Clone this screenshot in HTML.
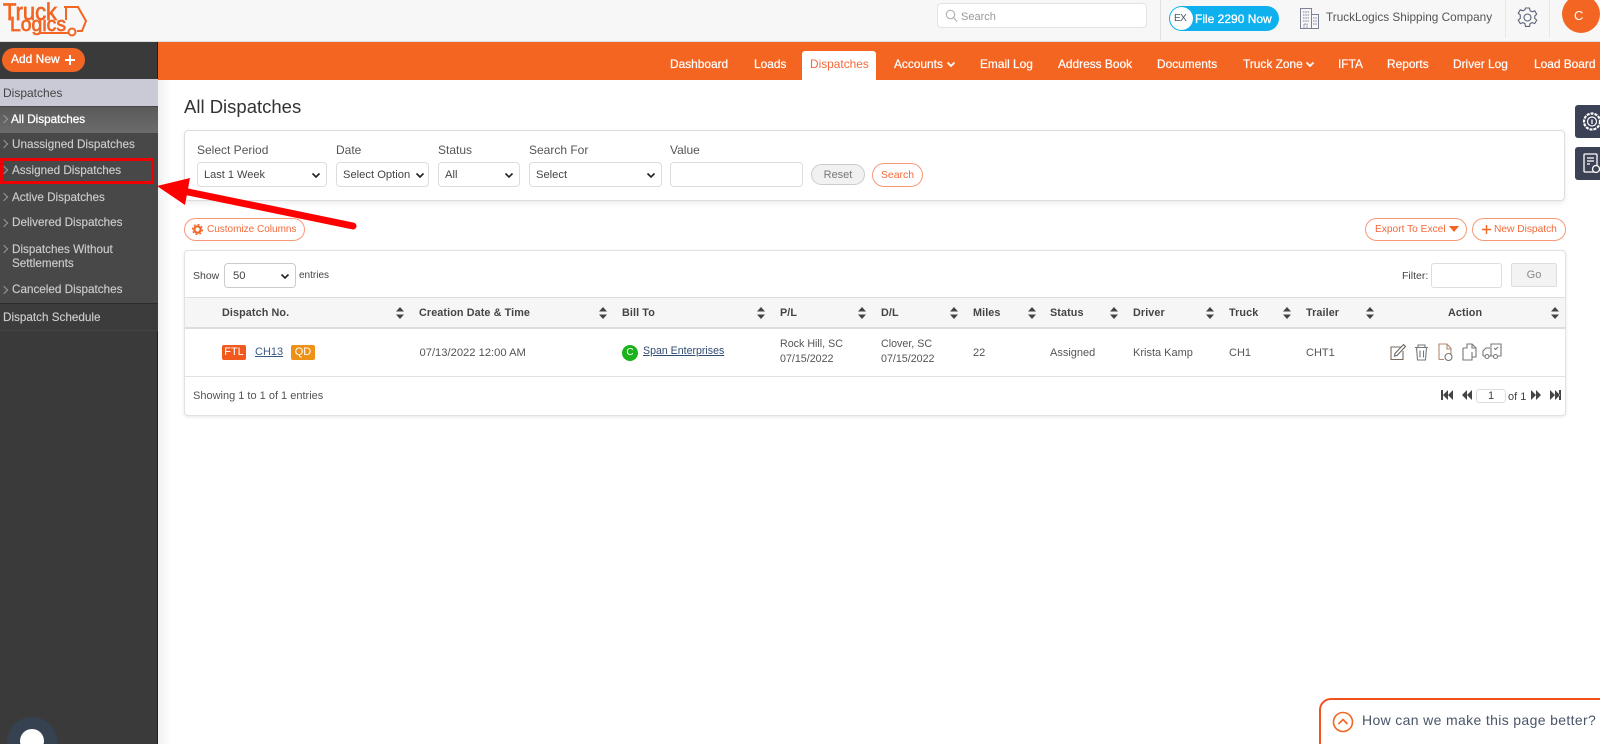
<!DOCTYPE html>
<html><head><meta charset="utf-8"><title>All Dispatches</title>
<style>
*{box-sizing:border-box}
html,body{margin:0;padding:0;width:1600px;height:744px;overflow:hidden;background:#fff;font-family:"Liberation Sans",sans-serif;color:#3f4450}
#p{position:relative;width:1600px;height:744px;overflow:hidden;contain:paint}
.a{position:absolute}
.t{position:absolute;white-space:nowrap;line-height:16px;font-size:12px}
.nav{position:absolute;top:56px;color:#fff;font-size:11.9px;line-height:16px;white-space:nowrap;font-weight:400;-webkit-text-stroke:.2px #fff}
.side{position:absolute;left:12px;color:#ccc;font-size:11.7px;line-height:16px;white-space:nowrap;-webkit-text-stroke:.15px #ccc}
.chev{position:absolute;left:1px;width:6px;height:6px;border-top:1px solid #999;border-right:1px solid #999;transform:rotate(45deg)}
.box{position:absolute;background:#fff;border:1px solid #ddd;border-radius:4px;font-size:11.2px;line-height:24px;padding-left:7px;color:#444}
.box svg{position:absolute;right:5px;top:9px}
.btn{position:absolute;border:1px solid #f8997a;border-radius:13px;color:#f6693a;font-size:10.2px;line-height:22px;white-space:nowrap;background:#fff}
.th{position:absolute;top:305px;font-size:10.8px;line-height:16px;font-weight:700;color:#444;white-space:nowrap;letter-spacing:.1px}
.td{position:absolute;font-size:11px;line-height:14px;color:#555;white-space:nowrap}
.s{position:absolute;top:307px}
</style></head><body><div id="p">

<!-- header -->
<div class="a" style="left:0;top:0;width:1600px;height:42px;background:#f7f7f7;border-bottom:1px solid #ddd"></div>
<svg class="a" style="left:0;top:0" width="92" height="40" viewBox="0 0 92 40">
<text x="3" y="20" font-family="Liberation Sans" font-size="24" fill="#f26522" stroke="#f26522" stroke-width=".7" textLength="54" lengthAdjust="spacingAndGlyphs">Truck</text>
<text x="10" y="31" font-family="Liberation Sans" font-size="20" fill="#f26522" stroke="#f26522" stroke-width=".7" textLength="56" lengthAdjust="spacingAndGlyphs">Logics</text>
<path d="M64 7H78L86 21 82 31H77M68 33H40M66 7V20" fill="none" stroke="#f26522" stroke-width="2"/>
<circle cx="72" cy="32" r="3.500" fill="none" stroke="#f26522" stroke-width="2"/>
</svg>

<div class="a" style="left:937px;top:3px;width:210px;height:25px;background:#fff;border:1px solid #e3e3e3;border-radius:4px"></div>
<svg class="a" style="left:945px;top:9px" width="13" height="14"><circle cx="5.500" cy="5.500" r="4.200" fill="none" stroke="#aaa"/><path d="M8.500 8.500L12 12.500" stroke="#aaa"/></svg>
<div class="t" style="left:961px;top:9px;color:#999;font-size:11px">Search</div>
<div class="a" style="left:1160px;top:0;width:1px;height:40px;background:#e2e2e2"></div>
<div class="a" style="left:1169px;top:6px;width:110px;height:25px;background:#0fb0ee;border-radius:13px"></div>
<div class="a" style="left:1170px;top:7px;width:23px;height:23px;background:#fff;border-radius:50%"></div>
<div class="t" style="left:1174px;top:11px;font-size:10px;color:#456;letter-spacing:-.5px">EX</div>
<div class="t" style="left:1195px;top:11px;color:#fff;font-size:12px;font-weight:400;-webkit-text-stroke:.3px #fff">File 2290 Now</div>
<svg class="a" style="left:1300px;top:8px" width="19" height="21" fill="none" stroke="#7a8296"><rect x=".5" y=".5" width="11" height="20"/><rect x="11.500" y="6.500" width="7" height="14"/><path d="M3 4h6M3 7h6M3 10h6M3 13h6M13 10h4M13 13h4M13 16h4M4 20v-4h3v4" stroke-dasharray="1.500 .8"/></svg>
<div class="t" style="left:1326px;top:9px;font-size:11.800px;color:#555">TruckLogics Shipping Company</div>
<div class="a" style="left:1505px;top:0;width:1px;height:38px;background:#e8e8e8"></div>
<svg class="a" style="left:1517px;top:7px" width="21" height="21" viewBox="0 0 21 21" fill="none" stroke="#5a6478" stroke-width="1.100"><path d="M8.500 1h4l.6 2.800 2 1 2.600-1 2 3.400-2 1.900v2.200l2 1.900-2 3.400-2.600-1-2 1-.6 2.800h-4l-.6-2.800-2-1-2.600 1-2-3.400 2-1.900V8.100l-2-1.900 2-3.400 2.600 1 2-1z"/><circle cx="10.500" cy="10.500" r="3.500"/></svg>
<div class="a" style="left:1549px;top:0;width:1px;height:38px;background:#e8e8e8"></div>
<div class="a" style="left:1562px;top:-5px;width:38px;height:38px;background:#f26522;border-radius:50%"></div>
<div class="t" style="left:1574px;top:8px;color:#fff;font-size:13px">C</div>

<!-- orange bar -->
<div class="a" style="left:158px;top:42px;width:1442px;height:38px;background:#f56522"></div>
<div class="a" style="left:802px;top:51px;width:74px;height:29px;background:#fff;border-radius:3px 3px 0 0"></div>
<div class="nav" style="left:670px">Dashboard</div>
<div class="nav" style="left:754px">Loads</div>
<div class="nav" style="left:810px;color:#f6693a;-webkit-text-stroke:0">Dispatches</div>
<div class="nav" style="left:894px">Accounts</div>
<svg class="a" style="left:946px;top:61px" width="10" height="7"><path d="M1.500 1.500L5 5 8.500 1.500" fill="none" stroke="#fff" stroke-width="1.800"/></svg>
<div class="nav" style="left:980px">Email Log</div>
<div class="nav" style="left:1058px">Address Book</div>
<div class="nav" style="left:1157px">Documents</div>
<div class="nav" style="left:1243px">Truck Zone</div>
<svg class="a" style="left:1305px;top:61px" width="10" height="7"><path d="M1.500 1.500L5 5 8.500 1.500" fill="none" stroke="#fff" stroke-width="1.800"/></svg>
<div class="nav" style="left:1338px">IFTA</div>
<div class="nav" style="left:1387px">Reports</div>
<div class="nav" style="left:1453px">Driver Log</div>
<div class="nav" style="left:1534px">Load Board</div>

<!-- sidebar -->
<div class="a" style="left:0;top:42px;width:158px;height:702px;background:#3a3a3a;border-right:1px solid #222"></div>
<div class="a" style="left:158px;top:80px;width:14px;height:664px;background:linear-gradient(90deg,#f1f1f1,#fff)"></div>
<div class="a" style="left:2px;top:48px;width:83px;height:24px;background:#f26522;border-radius:12px"></div>
<div class="t" style="left:11px;top:51px;color:#fff;font-size:12px;-webkit-text-stroke:.3px #fff">Add New</div>
<svg class="a" style="left:64px;top:54px" width="12" height="12"><path d="M6 1v10M1 6h10" stroke="#fff" stroke-width="2"/></svg>
<div class="a" style="left:0;top:79px;width:158px;height:27px;background:#c9cad6"></div>
<div class="t" style="left:3px;top:85px;font-size:12px;color:#444">Dispatches</div>
<div class="a" style="left:0;top:106px;width:158px;height:197px;background:#484848"></div>
<div class="a" style="left:0;top:107px;width:158px;height:26px;background:linear-gradient(180deg,#5a5a5a,#6b6b6b)"></div>
<div class="chev" style="top:116px"></div><div class="side" style="top:112px;color:#fff;-webkit-text-stroke:.3px #fff;left:11px">All Dispatches</div>
<div class="chev" style="top:141px"></div><div class="side" style="top:137px">Unassigned Dispatches</div>
<div class="chev" style="top:167px"></div><div class="side" style="top:163px">Assigned Dispatches</div>
<div class="chev" style="top:194px"></div><div class="side" style="top:190px">Active Dispatches</div>
<div class="chev" style="top:220px"></div><div class="side" style="top:215px">Delivered Dispatches</div>
<div class="chev" style="top:246px"></div><div class="side" style="top:243px;line-height:14px">Dispatches Without<br>Settlements</div>
<div class="chev" style="top:287px"></div><div class="side" style="top:282px">Canceled Dispatches</div>
<div class="a" style="left:0;top:303px;width:158px;height:28px;background:#3c3c3c;border-top:1px solid #2c2c2c;border-bottom:1px solid #444"></div>
<div class="side" style="left:3px;top:310px">Dispatch Schedule</div>
<div class="a" style="left:7px;top:717px;width:50px;height:50px;border-radius:50%;background:#36424f"></div>
<div class="a" style="left:20px;top:729px;width:24px;height:24px;border-radius:50%;background:#fff"></div>

<!-- title -->
<div class="t" style="left:184px;top:96px;font-size:18.500px;line-height:22px;color:#333">All Dispatches</div>

<!-- filter card -->
<div class="a" style="left:184px;top:130px;width:1381px;height:71px;background:#fff;border:1px solid #ddd;border-radius:4px;box-shadow:0 2px 6px rgba(0,0,0,.08)"></div>
<div class="t" style="left:197px;top:142px;color:#555">Select Period</div>
<div class="t" style="left:336px;top:142px;color:#555">Date</div>
<div class="t" style="left:438px;top:142px;color:#555">Status</div>
<div class="t" style="left:529px;top:142px;color:#555">Search For</div>
<div class="t" style="left:670px;top:142px;color:#555">Value</div>
<div class="box" style="left:197px;top:162px;width:130px;height:25px;font-size:11px;padding-left:6px">Last 1 Week<svg width="10" height="7"><path d="M1.500 1.500L5 5 8.500 1.500" fill="none" stroke="#222" stroke-width="1.600"/></svg></div>
<div class="box" style="left:336px;top:162px;width:93px;height:25px;padding-left:6px">Select Option<svg width="10" height="7" style="right:3px"><path d="M1.500 1.500L5 5 8.500 1.500" fill="none" stroke="#222" stroke-width="1.600"/></svg></div>
<div class="box" style="left:438px;top:162px;width:82px;height:25px;padding-left:6px">All<svg width="10" height="7"><path d="M1.500 1.500L5 5 8.500 1.500" fill="none" stroke="#222" stroke-width="1.600"/></svg></div>
<div class="box" style="left:529px;top:162px;width:133px;height:25px;padding-left:6px">Select<svg width="10" height="7"><path d="M1.500 1.500L5 5 8.500 1.500" fill="none" stroke="#222" stroke-width="1.600"/></svg></div>
<div class="box" style="left:670px;top:162px;width:133px;height:25px"></div>
<div class="a" style="left:811px;top:164px;width:54px;height:21px;border:1px solid #ccc;border-radius:11px;background:#f1f1f1;color:#777;font-size:11px;line-height:20px;text-align:center">Reset</div>
<div class="btn" style="left:872px;top:163px;width:51px;height:24px;text-align:center;font-size:10.500px;line-height:23px">Search</div>

<!-- action buttons -->
<div class="btn" style="left:184px;top:218px;width:121px;height:23px;padding-left:22px;font-size:10px">Customize Columns</div>
<svg class="a" style="left:192px;top:224px" width="11" height="11"><circle cx="5.500" cy="5.500" r="3.200" fill="none" stroke="#f26522" stroke-width="2.200"/><circle cx="5.500" cy="5.500" r="5" fill="none" stroke="#f26522" stroke-width="1.200" stroke-dasharray="2 1.900"/></svg>
<div class="btn" style="left:1365px;top:218px;width:102px;height:23px;padding-left:9px">Export To Excel</div>
<svg class="a" style="left:1449px;top:226px" width="10" height="6"><path d="M0 0H10L5 6z" fill="#f26522"/></svg>
<div class="btn" style="left:1472px;top:218px;width:94px;height:23px;padding-left:21px">New Dispatch</div>
<svg class="a" style="left:1481px;top:224px" width="11" height="11"><path d="M5.500 1v9M1 5.500h9" stroke="#f26522" stroke-width="1.400"/></svg>

<!-- table card -->
<div class="a" style="left:184px;top:250px;width:1382px;height:166px;background:#fff;border:1px solid #e2e2e2;border-radius:4px;box-shadow:0 1px 3px rgba(0,0,0,.1)"></div>
<div class="t" style="left:193px;top:268px;font-size:10.500px;color:#444">Show</div>
<div class="box" style="left:224px;top:263px;width:72px;height:25px;padding-left:8px;border-color:#ccc">50<svg width="10" height="7"><path d="M1.500 1.500L5 5 8.500 1.500" fill="none" stroke="#222" stroke-width="1.600"/></svg></div>
<div class="t" style="left:299px;top:268px;font-size:10px;color:#444">entries</div>
<div class="t" style="left:1402px;top:268px;font-size:10.500px;color:#444">Filter:</div>
<div class="a" style="left:1431px;top:263px;width:71px;height:25px;border:1px solid #ddd;border-radius:3px;background:#fff"></div>
<div class="a" style="left:1511px;top:263px;width:46px;height:24px;border:1px solid #ddd;border-radius:2px;background:#f3f3f3;color:#888;font-size:11px;line-height:22px;text-align:center">Go</div>

<div class="a" style="left:185px;top:297px;width:1380px;height:32px;background:#f6f6f6;border-top:1px solid #ddd;border-bottom:2px solid #ddd"></div>
<div class="th" style="left:222px">Dispatch No.</div>
<div class="th" style="left:419px">Creation Date &amp; Time</div>
<div class="th" style="left:622px">Bill To</div>
<div class="th" style="left:780px">P/L</div>
<div class="th" style="left:881px">D/L</div>
<div class="th" style="left:973px">Miles</div>
<div class="th" style="left:1050px">Status</div>
<div class="th" style="left:1133px">Driver</div>
<div class="th" style="left:1229px">Truck</div>
<div class="th" style="left:1306px">Trailer</div>
<div class="th" style="left:1448px">Action</div>
<svg class="s" style="left:396px" width="8" height="12"><path d="M4 0L8 4.500H0zM4 12L0 7.500H8z" fill="#444"/></svg>
<svg class="s" style="left:599px" width="8" height="12"><path d="M4 0L8 4.500H0zM4 12L0 7.500H8z" fill="#444"/></svg>
<svg class="s" style="left:757px" width="8" height="12"><path d="M4 0L8 4.500H0zM4 12L0 7.500H8z" fill="#444"/></svg>
<svg class="s" style="left:858px" width="8" height="12"><path d="M4 0L8 4.500H0zM4 12L0 7.500H8z" fill="#444"/></svg>
<svg class="s" style="left:950px" width="8" height="12"><path d="M4 0L8 4.500H0zM4 12L0 7.500H8z" fill="#444"/></svg>
<svg class="s" style="left:1028px" width="8" height="12"><path d="M4 0L8 4.500H0zM4 12L0 7.500H8z" fill="#444"/></svg>
<svg class="s" style="left:1110px" width="8" height="12"><path d="M4 0L8 4.500H0zM4 12L0 7.500H8z" fill="#444"/></svg>
<svg class="s" style="left:1206px" width="8" height="12"><path d="M4 0L8 4.500H0zM4 12L0 7.500H8z" fill="#444"/></svg>
<svg class="s" style="left:1283px" width="8" height="12"><path d="M4 0L8 4.500H0zM4 12L0 7.500H8z" fill="#444"/></svg>
<svg class="s" style="left:1366px" width="8" height="12"><path d="M4 0L8 4.500H0zM4 12L0 7.500H8z" fill="#444"/></svg>
<svg class="s" style="left:1551px" width="8" height="12"><path d="M4 0L8 4.500H0zM4 12L0 7.500H8z" fill="#444"/></svg>

<!-- row -->
<div class="a" style="left:222px;top:345px;width:24px;height:15px;background:#f2591c;border-radius:2px;color:#fff;font-size:11px;line-height:15px;text-align:center">FTL</div>
<div class="td" style="left:255px;top:345px;text-decoration:underline;color:#3b5a80">CH13</div>
<div class="a" style="left:291px;top:345px;width:24px;height:15px;background:#ee9117;border-radius:2px;color:#fff;font-size:11px;line-height:15px;text-align:center">QD</div>
<div class="td" style="left:419.500px;top:346px;font-size:11.200px">07/13/2022 12:00 AM</div>
<div class="a" style="left:622px;top:345px;width:16px;height:16px;background:#1bb21b;border-radius:50%;color:#fff;font-size:10px;line-height:16px;text-align:center">C</div>
<div class="td" style="left:643px;top:344px;text-decoration:underline;color:#2e4a70;font-size:10.600px">Span Enterprises</div>
<div class="td" style="left:780px;top:337px;font-size:10.700px;line-height:15px">Rock Hill, SC<br>07/15/2022</div>
<div class="td" style="left:881px;top:337px;font-size:10.700px;line-height:15px">Clover, SC<br>07/15/2022</div>
<div class="td" style="left:973px;top:346px">22</div>
<div class="td" style="left:1050px;top:346px">Assigned</div>
<div class="td" style="left:1133px;top:346px">Krista Kamp</div>
<div class="td" style="left:1229px;top:346px">CH1</div>
<div class="td" style="left:1306px;top:346px">CHT1</div>

<svg class="a" style="left:1389px;top:343px" width="115" height="18" viewBox="0 0 115 18" fill="none" stroke="#7b6a5f" stroke-width="1.100">
<path d="M12 4H2v12.500h12V8"/><path d="M6 10.500L14.500 1.500l2 2L8 12.500 5.500 13z" stroke="#666"/>
<path d="M26 4.500h13M29 4.500V2h7v2.500M27.500 4.500l1 12.500h8l1-12.500M31 7.500v7M34.500 7.500v7" stroke="#777"/>
<path d="M50 16.500V1h8l4 4.500V11M58 1v5h4M50 16.500h5" stroke="#b08a70"/><circle cx="59.500" cy="14" r="3.500" stroke="#777"/>
<path d="M74 5v12h9V9M74 5h4V1h5l4 4v9h-4M83 1v4h4" stroke="#777"/>
<path d="M102 4V1h10v12h-3M102 13H101M94 13V8l3-3h5v8M94 13H96M100 13H104M105 5l1.500 1.500L109 4" stroke="#777"/><circle cx="98" cy="13.500" r="2" stroke="#777"/><circle cx="106.500" cy="13.500" r="2" stroke="#777"/>
</svg>

<div class="a" style="left:185px;top:376px;width:1380px;height:1px;background:#e2e2e2"></div>
<div class="t" style="left:193px;top:388px;font-size:11px;color:#555">Showing 1 to 1 of 1 entries</div>

<!-- pagination -->
<svg class="a" style="left:1441px;top:390px" width="120" height="11" viewBox="0 0 120 11" fill="#444">
<path d="M0 0h2v10H0zM7 0v10L2 5zM12 0v10L7 5z"/>
<path d="M26 0v10L21 5zM31 0v10L26 5z"/>
<path d="M90 0v10l5-5zM95 0v10l5-5z"/>
<path d="M109 0v10l5-5zM114 0v10l5-5zM118 0h2v10h-2z"/>
</svg>
<div class="a" style="left:1476px;top:389px;width:30px;height:14px;border:1px solid #ddd;border-radius:3px;font-size:11px;line-height:12px;text-align:center;color:#444">1</div>
<div class="t" style="left:1508px;top:389px;font-size:11px;color:#444">of 1</div>

<!-- side tabs -->
<div class="a" style="left:1575px;top:105px;width:30px;height:33px;background:#3b4256;border-radius:3px"></div>
<svg class="a" style="left:1582px;top:111px" width="18" height="21" fill="none" stroke="#fff"><circle cx="10" cy="10.500" r="8" stroke-width="2.200" stroke-dasharray="3 1"/><circle cx="10" cy="10.500" r="4.500" stroke-width="1.200"/><path d="M10 8.500v4.500" stroke-width="1.300"/></svg>
<div class="a" style="left:1575px;top:147px;width:30px;height:33px;background:#3b4256;border-radius:3px"></div>
<svg class="a" style="left:1583px;top:153px" width="17" height="22" fill="none" stroke="#fff" stroke-width="1.300"><rect x="1" y="1" width="13" height="18" rx="1"/><path d="M4 5h7M4 8h7M4 11h3"/><circle cx="13" cy="16" r="3.500" fill="#3b4256"/></svg>

<!-- feedback -->
<div class="a" style="left:1319px;top:698px;width:300px;height:80px;border:2px solid #f4511e;border-radius:12px;background:#fff"></div>
<svg class="a" style="left:1332px;top:711px" width="22" height="22" fill="none" stroke="#f26522" stroke-width="1.600"><circle cx="11" cy="11" r="9.500"/><path d="M6.500 13L11 8.500 15.500 13"/></svg>
<div class="t" style="left:1362px;top:712px;font-size:14px;color:#4a5568;letter-spacing:.35px">How can we make this page better?</div>

<!-- red annotation -->
<div class="a" style="left:0;top:158px;width:154px;height:26px;border:3px solid #e00"></div>
<svg class="a" style="left:150px;top:170px" width="215" height="70" viewBox="150 170 215 70">
<path d="M188 192L353 226" stroke="#f00" stroke-width="7" stroke-linecap="round"/>
<path d="M157 186L190 178 185 205z" fill="#f00"/>
</svg>
</div></body></html>
